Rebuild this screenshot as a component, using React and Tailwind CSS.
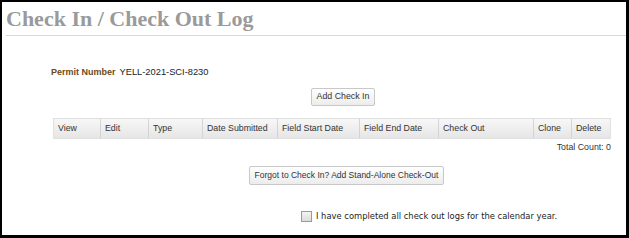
import React from 'react'

const COLS = [
  { label: 'View', w: 'w-[47px]' },
  { label: 'Edit', w: 'w-[48px]' },
  { label: 'Type', w: 'w-[54px]' },
  { label: 'Date Submitted', w: 'w-[75px]' },
  { label: 'Field Start Date', w: 'w-[82px]' },
  { label: 'Field End Date', w: 'w-[79px]' },
  { label: 'Check Out', w: 'w-[95px]' },
  { label: 'Clone', w: 'w-[38px]' },
  { label: 'Delete', w: 'flex-1' },
]

export default function App() {
  return (
    <div className="w-[629px] h-[238px] bg-white overflow-hidden">
      <div className="w-full h-full border-t-2 border-l-2 border-r-[3px] border-b-[3px] border-black flex flex-col font-['Liberation_Sans',sans-serif] text-[#333]">

        {/* title */}
        <div className="pl-[4px] pt-[4px] h-[34px] border-b border-[#d8d8d8] ml-[4px]">
          <h1 className="font-['Liberation_Serif',serif] font-bold text-[22px] leading-[26px] text-[#9a9a9a] -ml-[4px]">
            Check In / Check Out Log
          </h1>
        </div>

        {/* permit */}
        <div className="mt-[30px] ml-[49px] flex items-baseline gap-[4px] text-[9px]">
          <span className="font-bold text-[#6b4a1a]">Permit Number</span>
          <span className="text-[#222] text-[9.3px]">YELL-2021-SCI-8230</span>
        </div>

        <div className="mt-[8px] flex justify-center pl-[58px]">
          <button className="h-[18px] px-[5px] border border-[#c8c8c8] rounded-[2px] bg-gradient-to-b from-white to-[#ececec] text-[8.8px] text-[#333]">
            Add Check In
          </button>
        </div>

        {/* table header */}
        <div className="mt-[12px] ml-[51px] w-[558px] h-[21px] flex bg-gradient-to-b from-[#f7f7f7] to-[#e6e6e6] border border-[#e0e0e0] text-[8.8px] text-[#333]">
          {COLS.map((c, i) => (
            <div
              key={c.label}
              className={`${c.w} h-full flex items-center pl-[4px] ${i < COLS.length - 1 ? 'border-r border-[#d4d4d4]' : ''}`}
            >
              {c.label}
            </div>
          ))}
        </div>
        <div className="ml-[51px] w-[558px] text-right text-[8.8px] mt-[2px] text-[#333]">Total Count: 0</div>

        <div className="mt-[12px] flex justify-center pl-[65px]">
          <button className="h-[19px] px-[5px] border border-[#c8c8c8] rounded-[2px] bg-gradient-to-b from-white to-[#ececec] text-[8.5px] text-[#333]">
            Forgot to Check In? Add Stand-Alone Check-Out
          </button>
        </div>

        <label className="mt-[24px] ml-[299px] flex items-center gap-[4px] text-[9.3px] text-[#222] font-['DejaVu_Sans_Condensed','DejaVu_Sans',sans-serif]">
          <span className="w-[11px] h-[11px] border border-[#9a9a9a] bg-gradient-to-b from-[#f4f4f4] to-[#dcdcdc]" />
          I have completed all check out logs for the calendar year.
        </label>
      </div>
    </div>
  )
}
